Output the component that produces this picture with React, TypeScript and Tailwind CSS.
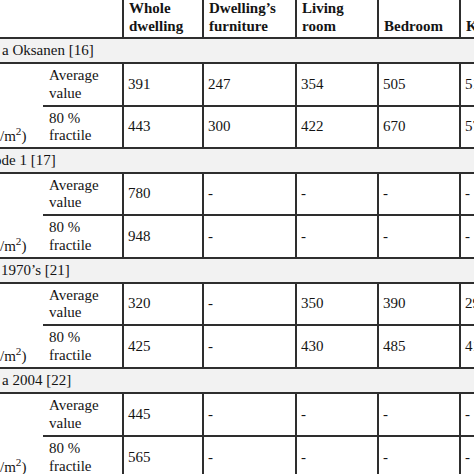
import React from "react";

// Column widths include each cell's 2px right border (label … bedroom); kitchen is clipped
const COL_W = ["w-[81px]", "w-[80px]", "w-[93px]", "w-[82px]", "w-[82px]"];

type Group = {
  title: React.ReactNode;
  first?: boolean;
  avgH: string;
  fracH: string;
  avg: string[];
  frac: string[];
};

const GROUPS: Group[] = [
  {
    title: <span className="ml-[2px]">a Oksanen [16]</span>,
    first: true,
    avgH: "h-[43px]",
    fracH: "h-[40px]",
    avg: ["391", "247", "354", "505", "513"],
    frac: ["443", "300", "422", "670", "575"],
  },
  {
    title: <span className="ml-[-6px]">ode 1 [17]</span>,
    avgH: "h-[42px]",
    fracH: "h-[41px]",
    avg: ["780", "-", "-", "-", "-"],
    frac: ["948", "-", "-", "-", "-"],
  },
  {
    title: <span className="ml-[1px]">1970’s [21]</span>,
    avgH: "h-[42px]",
    fracH: "h-[41px]",
    avg: ["320", "-", "350", "390", "295"],
    frac: ["425", "-", "430", "485", "410"],
  },
  {
    title: <span className="ml-[2px]">a 2004 [22]</span>,
    avgH: "h-[43px]",
    fracH: "h-[41px]",
    avg: ["445", "-", "-", "-", "-"],
    frac: ["565", "-", "-", "-", "-"],
  },
];

function DataRow({ label, values, h, last }: { label: React.ReactNode; values: string[]; h: string; last?: boolean }) {
  return (
    <div className={`flex ${h} ${last ? "" : "border-b-2 border-[#2e2e2e]"}`}>
      <div className={`${COL_W[0]} shrink-0 flex items-center pl-[6px] border-r-2 border-[#2e2e2e]`}>
        <span>{label}</span>
      </div>
      {values.map((v, i) => (
        <div
          key={i}
          className={`${i < 4 ? COL_W[i + 1] + " border-r-2 border-[#2e2e2e]" : "w-[80px]"} shrink-0 flex items-center pl-[4px]`}
        >
          {v}
        </div>
      ))}
    </div>
  );
}

export default function App() {
  const headers: React.ReactNode[] = [
    <>Whole<br />dwelling</>,
    <>Dwelling’s<br />furniture</>,
    <>Living<br />room</>,
    <>Bedroom</>,
    <>Kitchen</>,
  ];

  return (
    <div className="w-[474px] h-[474px] overflow-hidden bg-white font-['Liberation_Serif',serif] text-[15px] leading-[17.5px] text-[#141414]">
      <div className="w-[541px]">
        {/* Header */}
        <div className="flex h-[39px] border-b-2 border-[#2e2e2e]">
          <div className="w-[43px] shrink-0" />
          <div className={`${COL_W[0]} shrink-0 border-r-2 border-[#2e2e2e]`} />
          {headers.map((hd, i) => (
            <div
              key={i}
              className={`${i < 4 ? COL_W[i + 1] + " border-r-2 border-[#2e2e2e]" : "w-[80px]"} shrink-0 flex items-end pb-[2px] pl-[5px] font-bold whitespace-nowrap`}
            >
              <span>{hd}</span>
            </div>
          ))}
        </div>

        {GROUPS.map((g, gi) => (
          <div key={gi}>
            <div
              className={`flex items-center bg-[#f2f2f2] border-b-2 border-[#2e2e2e] whitespace-nowrap overflow-hidden ${
                g.first ? "h-[25px]" : "h-[27px] border-t-2"
              }`}
            >
              {g.title}
            </div>
            <div className="flex">
              <div className="w-[43px] shrink-0 flex items-end pb-[2px] overflow-hidden">
                <span className="whitespace-nowrap">
                  /m<sup>2</sup>)
                </span>
              </div>
              <div className="flex flex-col">
                <DataRow label={<>Average<br />value</>} values={g.avg} h={g.avgH} />
                <DataRow label={<>80 %<br />fractile</>} values={g.frac} h={g.fracH} last />
              </div>
            </div>
          </div>
        ))}
      </div>
    </div>
  );
}
